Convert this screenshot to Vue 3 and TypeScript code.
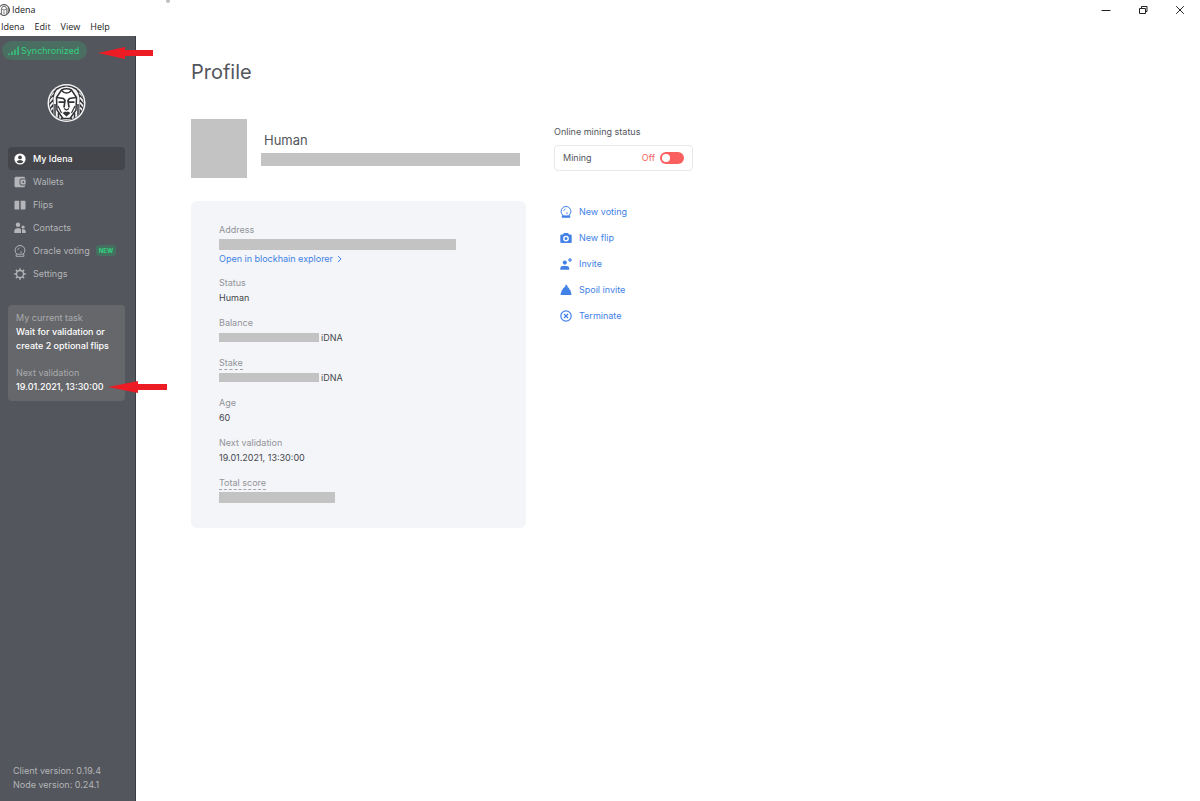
<script setup lang="ts">
import { ref } from 'vue'

interface NavItem {
  label: string
  icon: string
  active?: boolean
  badge?: string
}

interface Detail {
  label: string
  value?: string
  hint?: boolean
  bar?: 'address' | 'amount' | 'score'
  link?: string
}

interface Action {
  label: string
  icon: string
}

const menus: string[] = ['Idena', 'Edit', 'View', 'Help']

const navItems: NavItem[] = [
  { label: 'My Idena', icon: 'profile', active: true },
  { label: 'Wallets', icon: 'wallet' },
  { label: 'Flips', icon: 'flips' },
  { label: 'Contacts', icon: 'contacts' },
  { label: 'Oracle voting', icon: 'oracle', badge: 'NEW' },
  { label: 'Settings', icon: 'settings' },
]

const details: Detail[] = [
  { label: 'Address', bar: 'address', link: 'Open in blockhain explorer' },
  { label: 'Status', value: 'Human' },
  { label: 'Balance', bar: 'amount', value: 'iDNA' },
  { label: 'Stake', bar: 'amount', value: 'iDNA', hint: true },
  { label: 'Age', value: '60' },
  { label: 'Next validation', value: '19.01.2021, 13:30:00' },
  { label: 'Total score', bar: 'score', hint: true },
]

const actions: Action[] = [
  { label: 'New voting', icon: 'oracle' },
  { label: 'New flip', icon: 'camera' },
  { label: 'Invite', icon: 'invite' },
  { label: 'Spoil invite', icon: 'spoil' },
  { label: 'Terminate', icon: 'terminate' },
]

const mining = ref(false)
</script>

<template>
  <div class="window">
    <header class="chrome">
      <div class="titlebar">
        <svg class="app-icon" viewBox="0 0 12 14" aria-hidden="true">
          <circle cx="4" cy="7" r="5.4" fill="#fff" stroke="#333" />
          <path d="M1.4 11V6.2Q1.6 3.4 4 3.2Q6.600 3.400 6.800 6.200V11M2.200 6.400H3.500M4.700 6.400H6M4 6.500V8.700M2.900 10H5.200M8.200 4.500V10" fill="none" stroke="#444" stroke-width=".8" />
        </svg>
        <span class="app-name">Idena</span>
        <div class="window-controls">
          <button type="button" aria-label="Minimize">
            <svg viewBox="0 0 10 10"><path d="M.5 5.500H9.500" /></svg>
          </button>
          <button type="button" aria-label="Restore">
            <svg viewBox="0 0 10 10"><path d="M1.500 3.500H7.500V8.500H1.500ZM3.500 3.500V1.500H9V6.500H7.500" /></svg>
          </button>
          <button type="button" aria-label="Close">
            <svg viewBox="0 0 10 10"><path d="M1.200 1.200L8.800 8.800M8.800 1.200L1.200 8.800" /></svg>
          </button>
        </div>
        <span class="speck"></span>
      </div>
      <nav class="menubar" aria-label="Application menu">
        <button v-for="menu in menus" :key="menu" type="button">{{ menu }}</button>
      </nav>
    </header>

    <div class="body">
      <aside class="sidebar">
        <div class="sync">
          <svg class="signal" viewBox="0 0 11 10" aria-hidden="true">
            <path d="M1 9V7.500M4 9V5.500M7 9V3.500M10 9V.5" fill="none" stroke="currentColor" stroke-width="1.400" />
          </svg>
          Synchronized
          <svg class="arrow arrow-sync" viewBox="0 0 55 12" aria-hidden="true">
            <path d="M0 6L27 0V3H55V9H27V12Z" fill="#ed1c24" />
          </svg>
        </div>

        <svg class="logo" viewBox="0 0 78 80" role="img" aria-label="Idena logo">
          <defs>
            <clipPath id="disc"><circle cx="39" cy="40" r="34" /></clipPath>
          </defs>
          <circle cx="39" cy="40" r="38" fill="#f4f4f5" />
          <circle cx="39" cy="40" r="35" fill="#333438" />
          <g clip-path="url(#disc)">
            <path d="M13 80V30Q16 8 39 7Q62 8 65 30V80Z" fill="#f4f4f5" />
            <g stroke="#f4f4f5" stroke-width="3.500" fill="none">
              <path d="M13 19L3 31M12 29L2 41M12 39L2 51M12 49L2 61M65 19L75 31M66 29L76 41M66 39L76 51M66 49L76 61" />
            </g>
            <path d="M19 29L29 14Q39 9 49 14L59 29L58 54L46 71H32L20 54Z" fill="#fff" stroke="#333438" stroke-width="3" />
            <path d="M28 14Q39 26 50 14" fill="none" stroke="#333438" stroke-width="3" />
            <path d="M16 42V77M23 60V77M62 42V77M55 60V77M29 69V77M49 69V77" stroke="#333438" stroke-width="3" />
            <g fill="none" stroke="#333438" stroke-width="3.500">
              <path d="M20 29L33 31L36 35L34 49M58 29L45 31L42 35L44 49" />
              <path d="M23 38H34M44 38H55" />
              <path d="M34 51L39 54L44 51M22 46L29 60M56 46L49 60" stroke-width="2.500" />
            </g>
            <path d="M31 60L36 57L39 58L42 57L47 60L39 67Z" fill="#333438" />
          </g>
        </svg>

        <nav class="nav" aria-label="Main">
          <a v-for="item in navItems" :key="item.label" href="#" :class="{ active: item.active }">
            <svg class="icon" viewBox="0 0 12 12" aria-hidden="true">
              <template v-if="item.icon === 'profile'">
                <circle cx="6" cy="6" r="5.600" fill="currentColor" />
                <circle cx="6" cy="4.400" r="1.900" fill="#45464b" />
                <path d="M2.600 8.700Q3.500 7 6 7T9.400 8.700Q8 10.200 6 10.200T2.600 8.700Z" fill="#45464b" />
              </template>
              <template v-else-if="item.icon === 'wallet'">
                <path d="M2 .8H10Q11 .8 11.200 2.500H7.500Q5.500 2.600 5.500 4.500V7.500Q5.500 9.500 7.500 9.600H11.200Q11 11.200 10 11.200H2Q.5 11.200.5 9.700V2.300Q.5.8 2 .8Z" fill="currentColor" />
                <path d="M7.500 3.500H11.600V8.600H7.500Q6.500 8.600 6.500 7.600V4.500Q6.500 3.500 7.500 3.500ZM8.600 5V7.100H9.900V5Z" fill="currentColor" fill-rule="evenodd" />
              </template>
              <path v-else-if="item.icon === 'flips'" d="M1.200 1.700H5.200V10.500H1.200Q.5 10.500.5 9.800V2.400Q.5 1.700 1.200 1.700ZM6.700 1.700H10.700Q11.500 1.700 11.500 2.400V9.800Q11.500 10.500 10.700 10.500H6.700Z" fill="currentColor" />
              <g v-else-if="item.icon === 'contacts'" fill="currentColor">
                <circle cx="4" cy="2.800" r="2.200" />
                <circle cx="9.100" cy="5" r="1.600" />
                <path d="M.3 11V8.700Q.6 6.500 3 6.300H5.200Q6.800 6.500 7 7.700V11ZM8 11V8.600Q8 7.600 7.700 7.300H9.500Q11.500 7.400 11.700 9V11Z" />
              </g>
              <g v-else-if="item.icon === 'oracle'" fill="none" stroke="currentColor">
                <path d="M2.700 9A4.900 4.900 0 1 1 9.300 9" />
                <path d="M2.300 9.200H9.700L10 11.300H2Z" stroke-width=".9" />
                <path d="M3.600 5Q4 3.300 5.500 2.900M6 7.200H8" stroke-width=".8" />
              </g>
              <g v-else fill="none" stroke="currentColor">
                <circle cx="6" cy="6" r="3.500" stroke-width="1.300" />
                <path d="M6 .2V2.500M6 9.500V11.800M.2 6H2.500M9.500 6H11.800M1.900 1.900L3.500 3.500M8.500 8.500L10.100 10.100M10.100 1.900L8.500 3.500M3.500 8.500L1.900 10.100" stroke-width="1.500" />
              </g>
            </svg>
            <span>{{ item.label }}</span>
            <span v-if="item.badge" class="badge">{{ item.badge }}</span>
          </a>
        </nav>

        <section class="task">
          <div class="task-block">
            <h2>My current task</h2>
            <p>Wait for validation or create 2 optional flips</p>
          </div>
          <div class="task-block">
            <h2>Next validation</h2>
            <p>19.01.2021, 13:30:00</p>
          </div>
          <svg class="arrow arrow-task" viewBox="0 0 59 12" aria-hidden="true">
            <path d="M0 6L30 0V3H59V9H30V12Z" fill="#ed1c24" />
          </svg>
        </section>

        <footer class="versions">
          <div>Client version: 0.19.4</div>
          <div>Node version: 0.24.1</div>
        </footer>
      </aside>

      <main class="main">
        <h1>Profile</h1>
        <div class="columns">
          <div class="profile">
            <div class="identity">
              <div class="avatar"></div>
              <div class="who">
                <div class="who-name">Human</div>
                <div class="who-bar"></div>
              </div>
            </div>
            <dl class="card">
              <div v-for="row in details" :key="row.label" class="row">
                <dt><span :class="{ hint: row.hint }">{{ row.label }}</span></dt>
                <dd>
                  <span v-if="row.bar" class="bar" :class="row.bar"></span>
                  <span v-if="row.value">{{ row.value }}</span>
                </dd>
                <dd v-if="row.link" class="link-line">
                  <a href="#" class="explorer">
                    {{ row.link }}
                    <svg viewBox="0 0 5 8" aria-hidden="true"><path d="M1 1L4 4L1 7" fill="none" stroke="currentColor" /></svg>
                  </a>
                </dd>
              </div>
            </dl>
          </div>

          <div class="side">
            <div class="mining-title">Online mining status</div>
            <label class="mining">
              <span>Mining</span>
              <span class="mining-state">{{ mining ? 'On' : 'Off' }}</span>
              <input v-model="mining" type="checkbox" role="switch" />
            </label>
            <div class="actions">
              <button v-for="action in actions" :key="action.label" type="button">
                <svg class="icon" viewBox="0 0 12 12" aria-hidden="true">
                  <g v-if="action.icon === 'oracle'" fill="none" stroke="currentColor">
                    <path d="M2.700 9A4.900 4.900 0 1 1 9.300 9" />
                    <path d="M2.300 9.200Q6 10.500 9.700 9.200L10 11.400H2Z" fill="currentColor" stroke-width=".6" />
                    <path d="M3.600 5Q4 3.300 5.500 2.900M6 7.200H8" stroke-width=".8" />
                  </g>
                  <path v-else-if="action.icon === 'camera'" d="M4 1H8L9 2.500H10.500Q11.700 2.500 11.700 3.700V9.700Q11.700 11 10.500 11H1.500Q.3 11 .3 9.700V3.700Q.3 2.500 1.500 2.500H3ZM6 3.700A2.900 2.900 0 1 0 6 9.500A2.900 2.900 0 1 0 6 3.700ZM6 5.100A1.500 1.500 0 1 1 6 8.100A1.500 1.500 0 1 1 6 5.100Z" fill="currentColor" fill-rule="evenodd" />
                  <g v-else-if="action.icon === 'invite'" fill="currentColor">
                    <circle cx="4.800" cy="4.600" r="2.100" />
                    <path d="M.3 11.700V9.900Q.6 7.900 2.700 7.900H6.800Q8.900 7.900 9.200 9.900V11.700Z" />
                    <path d="M10 0L10.700 1.500L12 2L10.700 2.600L10 4L9.300 2.600L8 2L9.300 1.500Z" stroke="currentColor" stroke-width=".5" />
                  </g>
                  <path v-else-if="action.icon === 'spoil'" d="M5.600.6Q8 1.400 7.700 3.200Q9.600 3.600 9.400 5.600Q11 6 10.700 7.900Q11.700 8.700 11.300 11H.7Q.3 8.700 1.400 7.900Q1.300 6 2.700 5.600Q2.700 3.800 4.500 3.200Q5.800 2.300 5.600.6Z" fill="currentColor" />
                  <g v-else fill="none" stroke="currentColor">
                    <circle cx="6" cy="6" r="5.200" stroke-width="1.200" />
                    <path d="M4 4L8 8M8 4L4 8" stroke-width="1.200" />
                  </g>
                </svg>
                {{ action.label }}
              </button>
            </div>
          </div>
        </div>
      </main>
    </div>
  </div>
</template>

<style>
body {
  margin: 0;
  background: #fff;
}
</style>

<style scoped>
* {
  box-sizing: border-box;
}

.window {
  display: flex;
  flex-direction: column;
  min-height: 100vh;
  font: 400 9px/14px Inter, "Liberation Sans", sans-serif;
  color: #53565c;
  background: #fff;
}

button {
  padding: 0;
  border: 0;
  background: none;
  font: inherit;
  color: inherit;
}

h1,
h2,
p,
dl,
dd {
  margin: 0;
}

a {
  text-decoration: none;
}

.chrome {
  font: 400 9px/14px "Open Sans", "Noto Sans", sans-serif;
  color: #222;
}

.titlebar {
  position: relative;
  display: flex;
  align-items: center;
  height: 20px;
}

.app-icon {
  width: 12px;
  height: 14px;
}

.window-controls {
  display: flex;
  gap: 27px;
  margin-left: auto;
  padding-right: 15px;
}

.window-controls button {
  display: flex;
}

.window-controls svg {
  width: 10px;
  height: 10px;
  fill: none;
  stroke: #222;
}

.speck {
  position: absolute;
  top: 0;
  left: 166px;
  width: 4px;
  height: 3px;
  border-radius: 0 0 2px 2px;
  background: #c0c0c2;
}

.menubar {
  display: flex;
  align-items: flex-start;
  gap: 10px;
  height: 16px;
  padding-left: 1px;
}

.body {
  display: flex;
  flex: 1;
}

.sidebar {
  display: flex;
  flex-direction: column;
  flex: none;
  width: 136px;
  padding: 5px 10px 9px 8px;
  border-right: 1px solid #3c3d43;
  background: #53565c;
}

.sync {
  position: relative;
  display: flex;
  align-items: center;
  align-self: flex-start;
  gap: 2px;
  height: 19px;
  margin-left: -6px;
  padding: 0 8px 0 6px;
  border-radius: 10px;
  color: #35d07f;
  background: #4a6e62;
}

.signal {
  width: 11px;
  height: 10px;
}

.arrow {
  position: absolute;
  height: 12px;
}

.arrow-sync {
  top: 6px;
  left: 96px;
  width: 55px;
}

.arrow-task {
  bottom: 8px;
  left: 100px;
  width: 59px;
}

.logo {
  align-self: center;
  width: 39px;
  height: 40px;
  margin: 23px 0 24px;
}

.nav {
  display: flex;
  flex-direction: column;
}

.nav a {
  display: flex;
  align-items: center;
  height: 23px;
  padding-left: 6px;
  border-radius: 4px;
  color: #b4b5b9;
}

.nav a.active {
  color: #fff;
  font-weight: 500;
  background: #45464b;
}

.icon {
  flex: none;
  width: 12px;
  height: 12px;
  margin-right: 7px;
}

.badge {
  height: 11px;
  margin-left: 6px;
  padding: 0 3px;
  border-radius: 3px;
  font-size: 6px;
  font-weight: 700;
  line-height: 11px;
  color: #35d07f;
  background: #43705f;
}

.task {
  position: relative;
  margin-top: 20px;
  padding: 6px 0 7px 8px;
  border-radius: 4px;
  background: #66676b;
}

.task h2 {
  font: inherit;
  color: #aaabae;
}

.task p {
  max-width: 100px;
  font-weight: 500;
  color: #fff;
}

.task-block + .task-block {
  margin-top: 13px;
}

.versions {
  margin-top: auto;
  padding-left: 5px;
  color: #b4b5b9;
}

.main {
  flex: 1;
  min-width: 0;
  padding: 23px 24px 24px 55px;
}

h1 {
  font-size: 20px;
  font-weight: 400;
  line-height: 26px;
}

.columns {
  display: grid;
  grid-template-columns: minmax(0, 335px) 139px;
  gap: 28px;
  margin-top: 34px;
}

.identity {
  display: flex;
  gap: 14px;
}

.avatar {
  flex: none;
  width: 56px;
  height: 59px;
  background: #c3c3c3;
}

.who {
  flex: 1;
  padding: 13px 6px 0 0;
}

.who-name {
  padding-left: 3px;
  font-size: 13px;
  line-height: 17px;
}

.who-bar {
  height: 13px;
  margin-top: 4px;
  background: #c3c3c3;
}

.card {
  display: flex;
  flex-direction: column;
  gap: 11px;
  margin-top: 23px;
  padding: 22px 28px 23px;
  border-radius: 6px;
  background: #f4f5f8;
}

dt {
  height: 14px;
  color: #919398;
}

.hint {
  display: inline-block;
  line-height: 13px;
  border-bottom: 1px dashed #a3a5a9;
}

dd {
  display: flex;
  align-items: center;
  gap: 2px;
  height: 15px;
  color: #45474c;
}

.link-line {
  height: 13px;
}

.bar {
  height: 11px;
  background: #c3c3c3;
}

.address {
  width: 237px;
}

.amount {
  width: 100px;
  height: 9px;
}

.score {
  width: 116px;
}

.explorer {
  display: flex;
  align-items: center;
  gap: 4px;
  color: #4281e6;
}

.explorer svg {
  width: 5px;
  height: 8px;
}

.mining-title {
  margin-top: 6px;
}

.mining {
  display: flex;
  align-items: center;
  height: 26px;
  margin-top: 6px;
  padding: 0 8px;
  border: 1px solid #e6e8ec;
  border-radius: 4px;
}

.mining-state {
  margin: 0 5px 0 auto;
  color: #f56565;
}

.mining input {
  display: flex;
  align-items: center;
  appearance: none;
  width: 24px;
  height: 12px;
  margin: 0;
  padding: 0 2px;
  border-radius: 6px;
  background: #f9605f;
}

.mining input::before {
  content: "";
  width: 8px;
  height: 8px;
  border-radius: 50%;
  background: #fff;
}

.mining input:checked {
  justify-content: flex-end;
  background: #4281e6;
}

.actions {
  display: flex;
  flex-direction: column;
  gap: 12px;
  margin-top: 34px;
  padding-left: 6px;
}

.actions button {
  display: flex;
  align-items: center;
  color: #4281e6;
}
</style>
